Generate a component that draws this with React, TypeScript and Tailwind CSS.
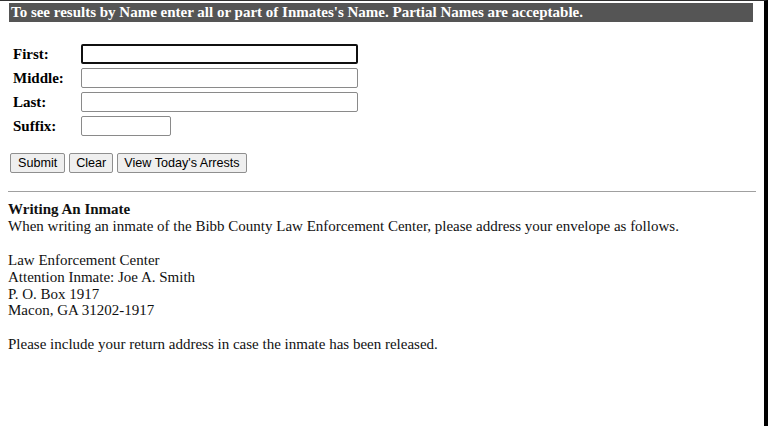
export default function App() {
  const rows = [
    { label: 'First:', w: 'w-[277px]', focus: true },
    { label: 'Middle:', w: 'w-[277px]', focus: false },
    { label: 'Last:', w: 'w-[277px]', focus: false },
    { label: 'Suffix:', w: 'w-[90px]', focus: false },
  ]

  return (
    <div
      className="h-[426px] w-[768px] overflow-hidden border-t border-r-4 border-t-[#333] border-r-black bg-white text-black"
      style={{ fontFamily: '"Liberation Serif", "Times New Roman", serif' }}
    >
      <div className="pl-[9px] pr-[11px] pt-[2px]">
        <div className="h-[19px] bg-[#555555] pl-[2px] text-[15px] font-bold leading-[19px] text-white">
          To see results by Name enter all or part of Inmates's Name. Partial Names are acceptable.
        </div>

        <div className="mt-[22px] flex flex-col gap-[4px] pl-[4px]">
          {rows.map((r) => (
            <div key={r.label} className="flex h-[20px] items-center">
              <span className="w-[68px] text-[15px] font-bold leading-[17px]">{r.label}</span>
              <input
                type="text"
                className={`h-[20px] ${r.w} rounded-[2px] ${
                  r.focus ? 'border-2 border-[#101010]' : 'border border-[#8a8a8a]'
                } bg-white outline-none`}
              />
            </div>
          ))}
        </div>

        <div
          className="mt-[17px] flex gap-[4px] pl-[1px] text-[12.6px] leading-[18px]"
          style={{ fontFamily: '"Liberation Sans", Arial, sans-serif' }}
        >
          <button className="h-[20px] rounded-[2px] border border-[#8f8f8f] bg-[#efefef] px-[7px]">
            Submit
          </button>
          <button className="h-[20px] rounded-[2px] border border-[#8f8f8f] bg-[#efefef] px-[6px]">
            Clear
          </button>
          <button className="h-[20px] rounded-[2px] border border-[#8f8f8f] bg-[#efefef] px-[6px]">
            View Today's Arrests
          </button>
        </div>
      </div>

      <hr className="mx-[8px] mt-[18px] border-t border-[#a0a0a0]" />

      <div className="mt-[9px] px-[8px] text-[15px] leading-[16.9px] text-[#111]">
        <div className="font-bold">Writing An Inmate</div>
        <div>
          When writing an inmate of the Bibb County Law Enforcement Center, please address your envelope as
          follows.
        </div>
        <div className="h-[16.9px]" />
        <div>Law Enforcement Center</div>
        <div>Attention Inmate: Joe A. Smith</div>
        <div>P. O. Box 1917</div>
        <div>Macon, GA 31202-1917</div>
        <div className="h-[16.9px]" />
        <div>Please include your return address in case the inmate has been released.</div>
      </div>
    </div>
  )
}
